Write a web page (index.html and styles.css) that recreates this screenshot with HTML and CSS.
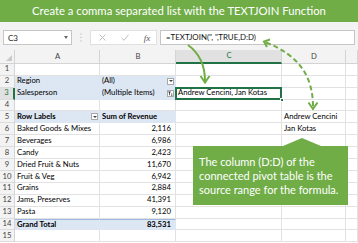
FILE: index.html
```html
<!DOCTYPE html>
<html>
<head>
<meta charset="utf-8">
<link rel="stylesheet" href="styles.css">
</head>
<body>
<div class="page">
  <div class="title">Create a comma separated list with the TEXTJOIN Function</div>
  <div class="toolbar">
    <div class="namebox"><span>C3</span><span class="caret"></span></div>
    <div class="dots"><svg width="2" height="9" viewBox="0 0 2 9"><circle cx="1" cy="1" r="0.8" fill="#c8c8c8"/><circle cx="1" cy="4.5" r="0.8" fill="#c8c8c8"/><circle cx="1" cy="8" r="0.8" fill="#c8c8c8"/></svg></div>
    <div class="fbtns">
      <span class="fb"><svg width="7" height="7" viewBox="0 0 7 7"><path d="M0.5 0.5L6.5 6.5M6.5 0.5L0.5 6.5" stroke="#bdbdbd" stroke-width="1" fill="none"/></svg></span>
      <span class="fb"><svg width="8" height="7" viewBox="0 0 8 7"><path d="M0.5 4L3 6.3L7.5 0.7" stroke="#bdbdbd" stroke-width="1" fill="none"/></svg></span>
      <span class="fb fx">fx</span>
    </div>
    <div class="formula">=TEXTJOIN(", ",TRUE,D:D)</div>
  </div>
  <div class="sheet">
    <div class="c corner"><svg width="6" height="6" viewBox="0 0 6 6"><polygon points="6,0 6,6 0,6" fill="#c9c9c9"/></svg></div>
    <div class="c ch">A</div>
    <div class="c ch">B</div>
    <div class="c ch sel">C</div>
    <div class="c ch">D</div>
    <div class="c ch"></div>

    <div class="c rh">1</div><div class="c"></div><div class="c"></div><div class="c"></div><div class="c"></div><div class="c"></div>

    <div class="c rh">2</div>
    <div class="c pf">Region</div>
    <div class="c pf">(All)<span class="btn"><span class="tri"></span></span></div>
    <div class="c"></div><div class="c"></div><div class="c"></div>

    <div class="c rh rsel">3</div>
    <div class="c pf">Salesperson</div>
    <div class="c pf">(Multiple Items)<span class="btn"><svg width="5" height="5" viewBox="0 0 5 5"><polygon points="0,0.5 3,0.5 1.9,2 1.9,4.5 1.1,4 1.1,2" fill="#333"/><path d="M3.8 2.2V4.6M3.2 4L3.8 4.7L4.4 4" stroke="#333" stroke-width="0.6" fill="none"/></svg></span></div>
    <div class="c active">Andrew Cencini, Jan Kotas<span class="handle"></span></div>
    <div class="c"></div><div class="c"></div>

    <div class="c rh">4</div><div class="c"></div><div class="c"></div><div class="c"></div><div class="c"></div><div class="c"></div>

    <div class="c rh">5</div>
    <div class="c pf b">Row Labels<span class="btn"><span class="tri"></span></span></div>
    <div class="c pf b">Sum of Revenue</div>
    <div class="c"></div>
    <div class="c">Andrew Cencini</div>
    <div class="c"></div>

    <div class="c rh">6</div><div class="c">Baked Goods &amp; Mixes</div><div class="c num">2,116</div><div class="c"></div><div class="c">Jan Kotas</div><div class="c"></div>
    <div class="c rh">7</div><div class="c">Beverages</div><div class="c num">6,986</div><div class="c"></div><div class="c"></div><div class="c"></div>
    <div class="c rh">8</div><div class="c">Candy</div><div class="c num">2,423</div><div class="c"></div><div class="c"></div><div class="c"></div>
    <div class="c rh">9</div><div class="c">Dried Fruit &amp; Nuts</div><div class="c num">11,670</div><div class="c"></div><div class="c"></div><div class="c"></div>
    <div class="c rh">10</div><div class="c">Fruit &amp; Veg</div><div class="c num">6,942</div><div class="c"></div><div class="c"></div><div class="c"></div>
    <div class="c rh">11</div><div class="c">Grains</div><div class="c num">2,884</div><div class="c"></div><div class="c"></div><div class="c"></div>
    <div class="c rh">12</div><div class="c">Jams, Preserves</div><div class="c num">41,391</div><div class="c"></div><div class="c"></div><div class="c"></div>
    <div class="c rh">13</div><div class="c">Pasta</div><div class="c num">9,120</div><div class="c"></div><div class="c"></div><div class="c"></div>
    <div class="c rh">14</div><div class="c pf gt b">Grand Total</div><div class="c pf gt b num">83,531</div><div class="c"></div><div class="c"></div><div class="c"></div>
    <div class="c rh">15</div><div class="c"></div><div class="c"></div><div class="c"></div><div class="c"></div><div class="c"></div>
  </div>

  <svg class="arrows" width="358" height="243" viewBox="0 0 358 243">
    <path d="M188 45 C199 53 205 64 205 81" stroke="#70ad47" stroke-width="2" fill="none"/>
    <polyline points="200.5,76 205,82.5 209.5,76" stroke="#70ad47" stroke-width="2" fill="none"/>
    <path d="M266 42.5 C298 55 313 75 313 107" stroke="#70ad47" stroke-width="2" fill="none" stroke-dasharray="5 3"/>
    <polyline points="308.5,102.5 313,109 317.5,102.5" stroke="#70ad47" stroke-width="2" fill="none"/>
    <polyline points="267,47 264,41.5 270,39.5" stroke="#70ad47" stroke-width="2" fill="none"/>
  </svg>

  <div class="callout">The column (D:D) of the<br>connected pivot table is the<br>source range for the formula.</div>
</div>
</body>
</html>
```

FILE: styles.css
```css
* {
  box-sizing: border-box;
  margin: 0;
  padding: 0;
}

html,
body {
  width: 358px;
  height: 243px;
  overflow: hidden;
  background: #ffffff;
}

body {
  font-family: "Lato", "Liberation Sans", sans-serif;
  color: #000000;
}

.page {
  position: relative;
  width: 358px;
  height: 243px;
}

.title {
  height: 22px;
  background: #70ad47;
  color: #ffffff;
  font-size: 11.3px;
  line-height: 22px;
  text-align: center;
}

.toolbar {
  height: 28px;
  background: #f3f3f3;
  display: flex;
  align-items: flex-start;
  padding: 8px 3px 0 3px;
}

.namebox {
  width: 69px;
  height: 15px;
  background: #ffffff;
  border: 1px solid #c6c6c6;
  display: flex;
  align-items: center;
  justify-content: space-between;
  padding: 0 3px 0 4px;
  font-size: 8px;
  color: #222;
}

.caret {
  width: 0;
  height: 0;
  border-left: 2.5px solid transparent;
  border-right: 2.5px solid transparent;
  border-top: 3px solid #666;
}

.dots {
  width: 18px;
  height: 15px;
  display: flex;
  align-items: center;
  justify-content: center;
}

.fbtns {
  width: 67px;
  height: 15px;
  background: #ffffff;
  border: 1px solid #e0e0e0;
  display: grid;
  grid-template-columns: 22px 24px 20px;
  align-items: center;
}

.fb {
  display: flex;
  justify-content: center;
  align-items: center;
}

.fx {
  font-family: "Liberation Serif", serif;
  font-style: italic;
  font-size: 9px;
  color: #555;
}

.formula {
  flex: 1;
  height: 15px;
  margin-left: 3px;
  background: #ffffff;
  border: 1px solid #c6c6c6;
  font-size: 7.9px;
  line-height: 13px;
  padding-left: 5px;
  color: #111;
}

.sheet {
  display: grid;
  grid-template-columns: 15px 85px 76px 106px 64px 12px;
  grid-template-rows: 13.8px repeat(15, 11.92px);
  font-size: 7.7px;
}

.c {
  position: relative;
  border-right: 1px solid #e2e2e2;
  border-bottom: 1px solid #e2e2e2;
  padding: 0 1px 0 2px;
  white-space: nowrap;
  display: flex;
  align-items: center;
  line-height: 1;
}

.corner {
  background: #f3f3f3;
  border-color: #d4d4d4;
  justify-content: flex-end;
  align-items: flex-end;
  padding: 0 2px 2px 0;
}

.ch {
  background: #f3f3f3;
  border-right-color: #d4d4d4;
  border-bottom-color: #d4d4d4;
  justify-content: center;
  color: #444;
}

.ch.sel {
  background: #e1e1e1;
  border-bottom: 2px solid #217346;
  color: #217346;
}

.rh {
  background: #f3f3f3;
  border-right-color: #d4d4d4;
  border-bottom-color: #dcdcdc;
  justify-content: center;
  color: #444;
  padding: 0;
}

.rh.rsel {
  background: #e1e1e1;
  border-right: 2px solid #217346;
  color: #217346;
}

.pf {
  background: #dde6f3;
  border-color: #dde6f3;
}

.gt {
  border-top: 1px solid #9db7df;
}

.b {
  font-weight: 700;
}

.num {
  justify-content: flex-end;
  padding-right: 4px;
}

.btn {
  margin-left: auto;
  width: 7px;
  height: 7px;
  background: #ffffff;
  border: 1px solid #a9a9a9;
  display: flex;
  align-items: center;
  justify-content: center;
}

.tri {
  width: 0;
  height: 0;
  border-left: 2px solid transparent;
  border-right: 2px solid transparent;
  border-top: 2px solid #444;
}

.active::after {
  content: "";
  position: absolute;
  left: -1px;
  top: -1px;
  right: -1px;
  bottom: -1px;
  border: 2px solid #217346;
}

.handle {
  position: absolute;
  right: -3px;
  bottom: -3px;
  width: 4px;
  height: 4px;
  background: #217346;
  border: 1px solid #ffffff;
  z-index: 2;
}

.arrows {
  position: absolute;
  left: 0;
  top: 0;
  pointer-events: none;
}

.callout {
  position: absolute;
  left: 193px;
  top: 146px;
  width: 155px;
  height: 59px;
  background: #70ad47;
  color: #ffffff;
  font-size: 11px;
  line-height: 14px;
  padding: 9px 0 0 6px;
}

.callout::before {
  content: "";
  position: absolute;
  left: 90px;
  top: -8px;
  border-left: 19.5px solid transparent;
  border-right: 19.5px solid transparent;
  border-bottom: 8px solid #70ad47;
}
```
